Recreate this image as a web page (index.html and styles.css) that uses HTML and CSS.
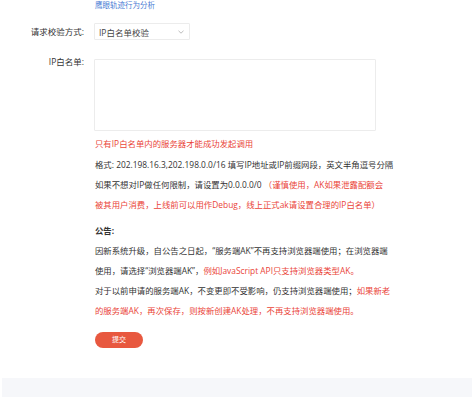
FILE: index.html
```html
<!DOCTYPE html>
<html lang="zh-CN">
<head>
<meta charset="utf-8">
<link rel="stylesheet" href="styles.css">
</head>
<body>
<div class="page">
  <div class="top-link"><a href="#">鹰眼轨迹行为分析</a></div>

  <div class="row row-select">
    <div class="label">请求校验方式:</div>
    <div class="select">
      <span>IP白名单校验</span>
      <svg class="chev" width="6" height="4" viewBox="0 0 6 4"><path d="M0.5 0.8 L3 3.2 L5.5 0.8" fill="none" stroke="#aaa" stroke-width="0.8"/></svg>
    </div>
  </div>

  <div class="row row-area">
    <div class="label label-top">IP白名单:</div>
    <div class="textarea"></div>
  </div>

  <div class="content">
    <div class="line red first">只有IP白名单内的服务器才能成功发起调用</div>
    <div class="line fmt">格式: 202.198.16.3,202.198.0.0/16 填写IP地址或IP前缀网段，英文半角逗号分隔</div>
    <div class="line">如果不想对IP做任何限制，请设置为0.0.0.0/0 <span class="red">（谨慎使用，AK如果泄露配额会</span></div>
    <div class="line red">被其用户消费，上线前可以用作Debug，线上正式ak请设置合理的IP白名单）</div>

    <div class="line title">公告:</div>
    <div class="line">因新系统升级，自公告之日起，“服务端AK”不再支持浏览器端使用；在浏览器端</div>
    <div class="line">使用，请选择“浏览器端AK”，<span class="red">例如JavaScript API只支持浏览器类型AK。</span></div>
    <div class="line">对于以前申请的服务端AK，不变更即不受影响，仍支持浏览器端使用；<span class="red">如果新老</span></div>
    <div class="line red">的服务端AK，再次保存，则按新创建AK处理，不再支持浏览器端使用。</div>

    <button class="submit">提交</button>
  </div>

  <div class="footer-bar"></div>
</div>
</body>
</html>
```

FILE: styles.css
```css
html, body {
  margin: 0;
  padding: 0;
  background: #fff;
}
body {
  font-family: "Open Sans", "Noto Sans CJK SC", sans-serif;
  font-size: 8.4px;
  color: #333;
}
.page {
  width: 474px;
  height: 397px;
  overflow: hidden;
}
.top-link {
  padding-left: 95px;
  height: 11px;
  line-height: 10px;
  font-size: 7.5px;
}
.top-link a {
  color: #4a7bd4;
  text-decoration: none;
}
.row {
  display: flex;
}
.row-select {
  margin-top: 12px;
  align-items: center;
}
.label {
  width: 84px;
  text-align: right;
  margin-right: 10px;
  color: #333;
  line-height: 12px;
  font-size: 8.5px;
}
.label-top {
  margin-top: -3px;
}
.select {
  height: 15px;
  border: 1px solid #ececec;
  border-radius: 1px;
  display: flex;
  align-items: center;
  justify-content: space-between;
  padding: 0 5px 0 4px;
  width: 85px;
  color: #444;
  font-size: 8.5px;
}
.chev {
  display: block;
}
.row-area {
  margin-top: 19px;
  align-items: flex-start;
}
.textarea {
  width: 280px;
  height: 70px;
  border: 1px solid #ececec;
  border-radius: 1px;
}
.content {
  padding-left: 95px;
}
.line {
  line-height: 20px;
  white-space: nowrap;
}
.red {
  color: #ea4438;
}
.first {
  margin-top: 3px;
}
.fmt {
  margin-top: 1px;
}
.title {
  margin-top: 6px;
  font-weight: bold;
}
.submit {
  display: block;
  margin-top: 11px;
  width: 48px;
  height: 16px;
  border: none;
  border-radius: 8px;
  background: #e8583f;
  color: #fff;
  font-family: inherit;
  font-size: 7px;
  padding: 0;
  line-height: 16px;
}
.footer-bar {
  margin: 30px 2px 0;
  height: 20px;
  background: #f6f7fa;
}
```
